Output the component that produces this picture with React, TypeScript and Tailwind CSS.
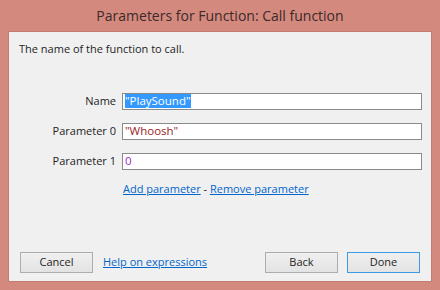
import React from 'react';

const font = { fontFamily: '"Open Sans", "Noto Sans", sans-serif' };

function Field({ label, children }: { label: string; children: React.ReactNode }) {
  return (
    <div className="flex items-center">
      <div className="w-[108px] text-right text-[11px] text-[#1e1e1e] pr-[1px]">{label}</div>
      <div className="ml-[5px] mr-[9px] flex-1 h-[17px] border border-[#8a8a8a] bg-white flex items-center px-[2px] text-[11.5px] leading-none">
        {children}
      </div>
    </div>
  );
}

function Button({ label, primary }: { label: string; primary?: boolean }) {
  return (
    <button
      className={
        'w-[73px] h-[21px] text-[11px] text-[#1e1e1e] border bg-gradient-to-b from-[#f0f0f0] to-[#e3e3e3] ' +
        (primary ? 'border-[#3c9ae6]' : 'border-[#adadad]')
      }
    >
      {label}
    </button>
  );
}

export default function App() {
  return (
    <div className="w-[440px] h-[290px] bg-[#d4897f] flex flex-col" style={font}>
      <div className="h-[31px] flex items-center justify-center text-[14px] text-[#3b2a28] pb-[1px]">
        Parameters for Function: Call function
      </div>
      <div className="mx-[8px] mb-[8px] flex-1 bg-[#f0f0f0] border border-[#c27c73] flex flex-col">
        <p className="pl-[10px] pt-[9px] text-[11px] text-[#1e1e1e]">The name of the function to call.</p>

        <div className="mt-[35px] flex flex-col gap-[13px]">
          <Field label="Name">
            <span className="bg-[#3399ff] text-white py-[1px]">"PlaySound"</span>
          </Field>
          <Field label="Parameter 0">
            <span className="text-[#9b1c1c]">"Whoosh"</span>
          </Field>
          <Field label="Parameter 1">
            <span className="text-[#9a2bbd]">0</span>
          </Field>
        </div>

        <div className="mt-[11px] pl-[114px] text-[11px] text-[#1e1e1e]">
          <a href="#" className="text-[#0066cc] underline">Add parameter</a>
          {' - '}
          <a href="#" className="text-[#0066cc] underline">Remove parameter</a>
        </div>

        <div className="mt-auto mb-[8px] px-[11px] flex items-center">
          <Button label="Cancel" />
          <a href="#" className="ml-[10px] text-[11px] text-[#0066cc] underline">Help on expressions</a>
          <div className="flex-1" />
          <Button label="Back" />
          <div className="w-[9px]" />
          <Button label="Done" primary />
        </div>
      </div>
    </div>
  );
}
